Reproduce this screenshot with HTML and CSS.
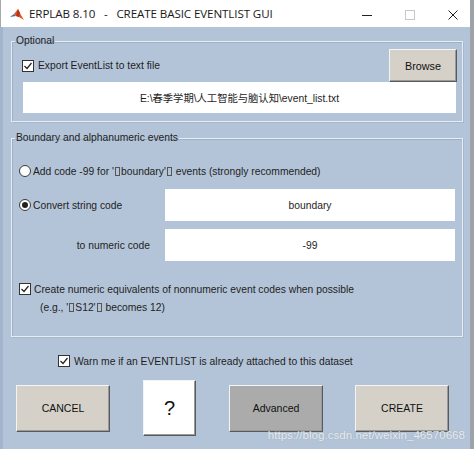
FILE: index.html
```html
<!DOCTYPE html>
<html>
<head>
<meta charset="utf-8">
<link rel="stylesheet" href="styles.css">
</head>
<body>
<div class="window">
  <div class="titlebar">
    <svg class="app-icon" width="14" height="13" viewBox="0 0 14 13">
      <path d="M0 9 L4 6 L6 8 Z" fill="#3a6fb3"/>
      <path d="M4 6 L8 1 L11 7 L14 12 L9 9 L6 8 Z" fill="#e2581c"/>
      <path d="M8 1 L10 5 L9 9 L6 8 Z" fill="#b8331a"/>
    </svg>
    <span class="title">ERPLAB 8.10&nbsp;&nbsp; - &nbsp;&nbsp;CREATE BASIC EVENTLIST GUI</span>
    <div class="controls">
      <svg width="10" height="10" viewBox="0 0 10 10"><path d="M0 5.5 H10" stroke="#222" stroke-width="1"/></svg>
      <svg width="10" height="10" viewBox="0 0 10 10"><rect x="0.5" y="0.5" width="9" height="9" fill="none" stroke="#c8c8c8" stroke-width="1"/></svg>
      <svg width="10" height="10" viewBox="0 0 10 10"><path d="M0.5 0.5 L9.5 9.5 M9.5 0.5 L0.5 9.5" stroke="#222" stroke-width="1"/></svg>
    </div>
  </div>
  <div class="client">
    <fieldset class="panel panel-optional">
      <legend>Optional</legend>
      <div class="panel-body">
        <div class="row-export">
          <label class="check"><span class="box checked"><svg width="10" height="10" viewBox="0 0 10 10"><path d="M1.5 5 L4 7.5 L8.5 2" fill="none" stroke="#222" stroke-width="1.2"/></svg></span>Export EventList to text file</label>
          <div class="btn btn-browse">Browse</div>
        </div>
        <div class="field field-path">E:\春季学期\人工智能与脑认知\event_list.txt</div>
      </div>
    </fieldset>

    <fieldset class="panel panel-boundary">
      <legend>Boundary and alphanumeric events</legend>
      <div class="panel-body body-boundary">
        <label class="radio-row"><span class="radio"></span>Add code -99 for '<span class="tofu"></span>boundary'<span class="tofu"></span>&nbsp;events (strongly recommended)</label>
        <div class="field-row">
          <label class="row-label"><span class="radio on"><span class="dot"></span></span>Convert string code</label>
          <div class="field field-input">boundary</div>
        </div>
        <div class="field-row">
          <label class="row-label right">to numeric code</label>
          <div class="field field-input">-99</div>
        </div>
        <label class="check check-numeric"><span class="box checked"><svg width="10" height="10" viewBox="0 0 10 10"><path d="M1.5 5 L4 7.5 L8.5 2" fill="none" stroke="#222" stroke-width="1.2"/></svg></span>Create numeric equivalents of nonnumeric event codes when possible</label>
        <div class="example">(e.g., '<span class="tofu"></span>S12'<span class="tofu"></span>&nbsp;becomes 12)</div>
      </div>
    </fieldset>

    <label class="check check-warn"><span class="box checked"><svg width="10" height="10" viewBox="0 0 10 10"><path d="M1.5 5 L4 7.5 L8.5 2" fill="none" stroke="#222" stroke-width="1.2"/></svg></span>Warn me if an EVENTLIST is already attached to this dataset</label>

    <div class="buttons">
      <div class="btn btn-main">CANCEL</div>
      <div class="btn btn-help">?</div>
      <div class="btn btn-main btn-adv">Advanced</div>
      <div class="btn btn-main">CREATE</div>
    </div>
    <div class="watermark">https://blog.csdn.net/weixin_46570668</div>
  </div>
</div>
</body>
</html>
```

FILE: styles.css
```css
* { box-sizing: border-box; }
html, body { margin: 0; padding: 0; }
body {
  width: 474px;
  height: 449px;
  overflow: hidden;
  background: #b4c4d8;
  font-family: "Liberation Sans", "Noto Sans CJK SC", Arial, sans-serif;
  font-size: 10.3px;
  color: #1e1e1e;
}
.window {
  width: 474px;
  height: 449px;
  display: flex;
  flex-direction: column;
}
.titlebar {
  height: 27px;
  background: #ffffff;
  border-left: 1px solid #a9a9a9;
  border-right: 4px solid #9ea3aa;
  display: flex;
  align-items: center;
  padding-left: 9px;
}
.app-icon { margin-right: 5px; margin-top: 1px; }
.title {
  font-family: "Open Sans", "Noto Sans", sans-serif;
  font-size: 11.6px;
  color: #1a1a1a;
  white-space: pre;
  letter-spacing: -0.1px;
}
.controls {
  margin-left: auto;
  display: flex;
  gap: 33px;
  margin-right: 12px;
  margin-top: 2px;
}
.client {
  position: relative;
  flex: 1;
  border-left: 3px solid #a3b5cc;
  border-right: 4px solid #9ea3aa;
  padding: 8px 7px 0 8px;
  display: flex;
  flex-direction: column;
}
.panel {
  margin: 0;
  padding: 0;
  border: 1px solid #e6edf5;
  box-shadow: inset 1px 1px 0 #9fb0c5, 1px 1px 0 #a7b7cb;
  min-width: 0;
}
.panel legend {
  margin-left: 3px;
  padding: 0 1px;
  line-height: 12px;
  font-size: 10.3px;
}
.panel-body { padding: 2px 5px 8px 10px; }
.row-export {
  display: flex;
  align-items: center;
  justify-content: space-between;
}
.check {
  display: flex;
  align-items: center;
  white-space: nowrap;
}
.box {
  width: 12px;
  height: 12px;
  background: #fff;
  border: 1px solid #333;
  margin-right: 4px;
  display: flex;
  align-items: center;
  justify-content: center;
  flex: none;
}
.btn {
  display: flex;
  align-items: center;
  justify-content: center;
  background: #d5d0c8;
  border: 1px solid;
  border-color: #f4f4f4 #5a5a5a #5a5a5a #f4f4f4;
  box-shadow: inset -1px -1px 0 #9a9a9a;
  color: #111;
}
.btn-browse {
  width: 68px;
  height: 33px;
  font-size: 10.8px;
}
.field {
  background: #fff;
  display: flex;
  align-items: center;
  justify-content: center;
  white-space: nowrap;
}
.field-path {
  height: 31px;
  margin-left: 1px;
  margin-right: 1px;
  font-size: 10.3px;
}
.panel-boundary { margin-top: 10px; }
.body-boundary { padding: 17px 7px 21px 7px; }
.radio-row {
  display: flex;
  align-items: center;
  height: 20px;
  white-space: nowrap;
}
.radio {
  width: 12px;
  height: 12px;
  border-radius: 50%;
  border: 1px solid #3a3a3a;
  background: #fff;
  margin-right: 2px;
  flex: none;
  display: flex;
  align-items: center;
  justify-content: center;
}
.dot {
  width: 6px;
  height: 6px;
  border-radius: 50%;
  background: #222;
}
.tofu {
  display: inline-block;
  width: 5px;
  height: 9px;
  border: 1px solid #555;
  margin: 0 1px;
  vertical-align: -1px;
}
.field-row {
  display: flex;
  align-items: center;
  margin-top: 8px;
}
.field-row + .field-row { margin-top: 8px; }
.row-label {
  width: 146px;
  flex: none;
  display: flex;
  align-items: center;
  white-space: nowrap;
}
.row-label.right {
  justify-content: flex-end;
  padding-right: 15px;
}
.field-input {
  flex: 1;
  height: 32px;
}
.check-numeric { margin-top: 21px; height: 14px; }
.check-numeric .box { margin-right: 3px; }
.example {
  margin-top: 5px;
  padding-left: 21px;
  height: 14px;
  line-height: 14px;
  white-space: nowrap;
}
.check-warn {
  margin-top: 17px;
  padding-left: 47px;
  height: 14px;
}
.buttons {
  margin-top: 12px;
  padding-left: 5px;
  display: flex;
  align-items: center;
}
.btn-main {
  width: 94px;
  height: 47px;
  font-size: 10.5px;
}
.btn-help {
  width: 53px;
  height: 56px;
  margin: 0 33px;
  background: #fff;
  font-size: 20px;
  font-weight: normal;
}
.btn-adv {
  background: #ababab;
  margin-right: 32px;
}
.watermark {
  position: absolute;
  right: 5px;
  bottom: 8px;
  font-size: 11.6px;
  color: rgba(255, 255, 255, 0.78);
  text-shadow: 0 0 1px rgba(120, 130, 140, 0.5);
  white-space: nowrap;
}
```
